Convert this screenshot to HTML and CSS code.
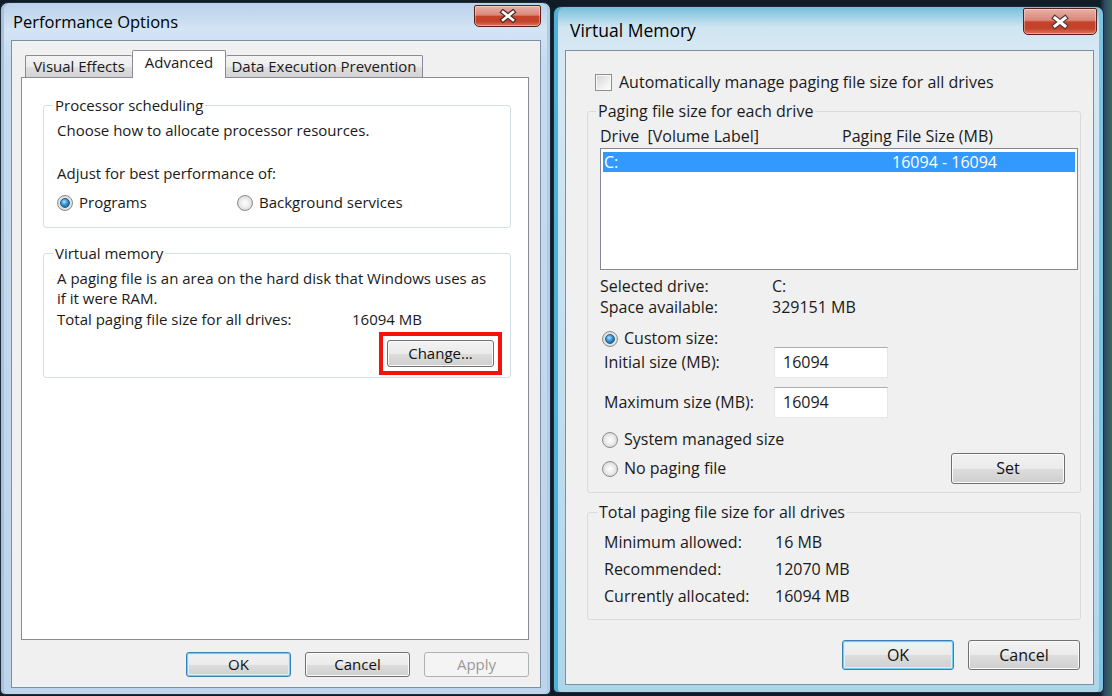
FILE: index.html
```html
<!DOCTYPE html>
<html lang="en">
<head>
    <meta charset="UTF-8">
    <title>Performance Options - Virtual Memory</title>
    <link rel="stylesheet" href="styles.css">
</head>
<body>
    <div class="desktop">
        <!-- Performance Options dialog -->
        <div class="window perf-window">
            <div class="titlebar">
                <span class="title">Performance Options</span>
                <div class="close-btn">
                    <svg width="18" height="14" viewBox="0 0 18 14">
                        <path d="M4 3 L14 11 M14 3 L4 11" stroke="#4a2a26" stroke-width="5" stroke-linecap="square"/>
                        <path d="M4 3 L14 11 M14 3 L4 11" stroke="#ffffff" stroke-width="2.6" stroke-linecap="square"/>
                    </svg>
                </div>
            </div>
            <div class="client perf-client">
                <div class="tabs">
                    <div class="tab tab-visual">Visual Effects</div>
                    <div class="tab tab-advanced active">Advanced</div>
                    <div class="tab tab-dep">Data Execution Prevention</div>
                </div>
                <div class="tab-panel">
                    <fieldset class="group">
                        <legend>Processor scheduling</legend>
                        <p>Choose how to allocate processor resources.</p>
                        <p class="adjust">Adjust for best performance of:</p>
                        <div class="radio-pair">
                            <label class="radio"><span class="radio-dot checked"></span>Programs</label>
                            <label class="radio"><span class="radio-dot"></span>Background services</label>
                        </div>
                    </fieldset>
                    <fieldset class="group vm-group">
                        <legend>Virtual memory</legend>
                        <p class="paging-note">A paging file is an area on the hard disk that Windows uses as<br>if it were RAM.</p>
                        <div class="total-row">
                            <span>Total paging file size for all drives:</span>
                            <span>16094 MB</span>
                        </div>
                        <div class="change-row">
                            <div class="highlight">
                                <button class="btn change-btn">Change...</button>
                            </div>
                        </div>
                    </fieldset>
                </div>
                <div class="dialog-buttons perf-buttons">
                    <button class="btn default">OK</button>
                    <button class="btn">Cancel</button>
                    <button class="btn" disabled>Apply</button>
                </div>
            </div>
        </div>

        <!-- Virtual Memory dialog -->
        <div class="window vm-window">
            <div class="titlebar">
                <span class="title">Virtual Memory</span>
                <div class="close-btn">
                    <svg width="20" height="16" viewBox="0 0 20 16">
                        <path d="M5 4 L15 12 M15 4 L5 12" stroke="#5a3a36" stroke-width="5.4" stroke-linecap="square"/>
                        <path d="M5 4 L15 12 M15 4 L5 12" stroke="#ffffff" stroke-width="3" stroke-linecap="square"/>
                    </svg>
                </div>
            </div>
            <div class="client vm-client">
                <label class="check-row"><span class="checkbox"></span>Automatically manage paging file size for all drives</label>

                <fieldset class="group flat drive-group">
                    <legend>Paging file size for each drive</legend>
                    <div class="list-head">
                        <span>Drive  [Volume Label]</span>
                        <span>Paging File Size (MB)</span>
                    </div>
                    <div class="listbox">
                        <div class="list-row selected">
                            <span>C:</span>
                            <span class="num">16094 - 16094</span>
                        </div>
                    </div>
                    <div class="info-grid">
                        <span>Selected drive:</span><span>C:</span>
                        <span>Space available:</span><span>329151 MB</span>
                    </div>
                    <label class="radio custom-radio"><span class="radio-dot checked"></span>Custom size:</label>
                    <div class="size-grid">
                        <span>Initial size (MB):</span><div class="textbox">16094</div>
                        <span>Maximum size (MB):</span><div class="textbox">16094</div>
                    </div>
                    <label class="radio system-radio"><span class="radio-dot"></span>System managed size</label>
                    <div class="nopage-row">
                        <label class="radio"><span class="radio-dot"></span>No paging file</label>
                        <button class="btn set-btn">Set</button>
                    </div>
                </fieldset>

                <fieldset class="group flat total-group">
                    <legend>Total paging file size for all drives</legend>
                    <div class="totals-grid">
                        <span>Minimum allowed:</span><span>16 MB</span>
                        <span>Recommended:</span><span>12070 MB</span>
                        <span>Currently allocated:</span><span>16094 MB</span>
                    </div>
                </fieldset>

                <div class="dialog-buttons vm-buttons">
                    <button class="btn default">OK</button>
                    <button class="btn">Cancel</button>
                </div>
            </div>
        </div>
    </div>
</body>
</html>
```

FILE: styles.css
```css
* {
    margin: 0;
    padding: 0;
    box-sizing: border-box;
}

body {
    width: 1112px;
    height: 696px;
    overflow: hidden;
    background: linear-gradient(90deg, #111d26 0, #111d26 1100px, #2e4c68 1105px, #3c6a58 1112px);
    font-family: "Open Sans", "Noto Sans", sans-serif;
    font-size: 15px;
    line-height: 17px;
    color: #1a1a1a;
}

.desktop {
    display: flex;
    align-items: flex-start;
    gap: 2px;
}

/* Aero window frame */
.window {
    display: flex;
    flex-direction: column;
    border: 1px solid #1d2c38;
    border-radius: 8px 8px 5px 5px;
}

.perf-window {
    width: 551px;
    height: 693px;
    margin-top: 2px;
    padding: 0 9px 6px 10px;
    background: linear-gradient(180deg, #b9d1ea 0, #d3e4f4 26px, #c6dbef 60px, #bcd4ec 100%);
    box-shadow: inset 3px 0 0 #a9c2dc, inset -3px 0 0 #b0cbe5;
}

.vm-window {
    width: 551px;
    height: 687px;
    margin-top: 6px;
    padding: 0 9px 7px 11px;
    background: linear-gradient(180deg, #74c0db 0, #cfe5f1 20px, #d6e8f3 42px, #aed6eb 100%);
    box-shadow: inset 4px 0 0 #4fb0d8, inset -4px 0 0 #7cc4e1;
}

.titlebar {
    display: flex;
    justify-content: space-between;
    align-items: flex-start;
}

.perf-window .titlebar {
    height: 37px;
}

.vm-window .titlebar {
    height: 43px;
}

.title {
    line-height: 20px;
    color: #000;
}

.perf-window .title {
    font-size: 16.5px;
    margin: 9px 0 0 2px;
}

.vm-window .title {
    font-size: 17.5px;
    margin: 13px 0 0 5px;
}

.close-btn {
    display: flex;
    align-items: center;
    justify-content: center;
    border: 1px solid #5a2018;
    border-radius: 2px 2px 5px 5px;
    background: linear-gradient(180deg, #eab0a5 0, #d9877a 45%, #c5432b 52%, #c4412a 78%, #dc7a62 100%);
    box-shadow: inset 0 0 0 1px rgba(255, 255, 255, 0.35);
}

.perf-window .close-btn {
    width: 67px;
    height: 22px;
    margin-top: 2px;
}

.vm-window .close-btn {
    width: 74px;
    height: 27px;
    margin: 1px -3px 0 0;
}

.client {
    flex: 1;
    display: flex;
    flex-direction: column;
    background: #f0f0f0;
    border: 1px solid #7b90a4;
}

/* Performance Options content */
.perf-client {
    padding: 9px 11px 10px 9px;
}

.tabs {
    display: flex;
    align-items: flex-end;
    height: 27px;
    padding-left: 4px;
}

.tab {
    height: 22px;
    display: flex;
    align-items: center;
    justify-content: center;
    border: 1px solid #898c95;
    border-bottom: none;
    border-radius: 2px 2px 0 0;
    background: linear-gradient(180deg, #f4f4f4 0, #ececec 50%, #e0e0e0 51%, #d3d3d3 100%);
}

.tab-visual {
    width: 107px;
    border-right: none;
}

.tab-advanced {
    width: 94px;
}

.tab-dep {
    width: 197px;
    border-left: none;
}

.tab.active {
    height: 28px;
    margin-bottom: -1px;
    padding-bottom: 4px;
    background: #fff;
    position: relative;
    z-index: 1;
}

.tab-panel {
    flex: 1;
    background: #fff;
    border: 1px solid #898c95;
    padding: 19px 17px 0 21px;
}

.group {
    border: 1px solid #d5dfe5;
    border-radius: 3px;
    padding: 8px 8px 16px 13px;
}

.group legend {
    padding: 0 2px;
    margin-left: -4px;
    line-height: 17px;
}

.adjust {
    margin-top: 26px;
}

.radio-pair {
    display: grid;
    grid-template-columns: 180px auto;
    margin-top: 12px;
}

.radio {
    display: flex;
    align-items: center;
    gap: 6px;
}

.radio-dot {
    width: 16px;
    height: 16px;
    border-radius: 50%;
    border: 1px solid #8c8c8c;
    background: radial-gradient(circle at 50% 50%, #ffffff 0, #ececec 45%, #c9c9c9 100%);
    display: inline-flex;
    align-items: center;
    justify-content: center;
}

.radio-dot.checked::after {
    content: "";
    width: 8px;
    height: 8px;
    border-radius: 50%;
    background: radial-gradient(circle at 40% 35%, #b4e3fb 0, #3593d6 45%, #0f4f82 100%);
    border: 1px solid #1e5a86;
}

.vm-group {
    margin-top: 17px;
    padding-top: 6px;
    padding-bottom: 2px;
}

.paging-note {
    white-space: nowrap;
    line-height: 20px;
}

.total-row {
    display: grid;
    grid-template-columns: 295px auto;
    margin-top: 3px;
}

.change-row {
    display: flex;
    justify-content: flex-end;
    margin-top: 4px;
}

.highlight {
    border: 4px solid #f4130a;
    padding: 4px;
}

/* Win7 push buttons */
.btn {
    font: inherit;
    color: #111;
    border: 1px solid #707070;
    border-radius: 3px;
    background: linear-gradient(180deg, #f2f2f2 0, #ebebeb 50%, #dddddd 51%, #cfcfcf 100%);
    box-shadow: inset 0 0 0 1px #fbfbfb;
    display: flex;
    align-items: center;
    justify-content: center;
}

.btn.default {
    border-color: #3c7fb1;
    box-shadow: inset 0 0 0 1px #6fd0f5, inset 0 0 0 2px #d9f0fb;
}

.btn:disabled {
    color: #9a9a9a;
    border-color: #adb2b5;
    background: #f4f4f4;
    box-shadow: none;
}

.change-btn {
    width: 107px;
    height: 27px;
}

.dialog-buttons {
    display: flex;
    justify-content: flex-end;
    gap: 14px;
}

.perf-buttons {
    margin-top: 12px;
}

.perf-buttons .btn {
    width: 105px;
    height: 25px;
}

/* Virtual Memory content */
.vm-client {
    font-size: 16px;
    padding: 23px 12px 14px 21px;
}

.check-row {
    display: flex;
    align-items: center;
    gap: 7px;
    margin-left: 8px;
}

.checkbox {
    width: 17px;
    height: 17px;
    border: 1px solid #8e8f8f;
    background: linear-gradient(135deg, #d4d4d4 0, #f4f4f4 70%, #ffffff 100%);
    box-shadow: inset 0 0 0 1px #f8f8f8;
}

.group.flat {
    width: 494px;
    border-color: #dadada;
}

.drive-group {
    margin-top: 12px;
    padding: 8px 2px 8px 12px;
}

.list-head {
    display: grid;
    grid-template-columns: 242px auto;
    white-space: pre;
}

.listbox {
    height: 122px;
    margin-top: 3px;
    background: #fff;
    border: 1px solid #828790;
    padding: 3px 2px 0 2px;
}

.list-row {
    display: grid;
    grid-template-columns: 239px 154px;
    height: 20px;
    align-items: center;
    padding-left: 1px;
}

.list-row.selected {
    background: #3399ff;
    color: #fff;
}

.list-row .num {
    text-align: right;
}

.info-grid {
    display: grid;
    grid-template-columns: 172px auto;
    row-gap: 4px;
    margin-top: 8px;
}

.custom-radio {
    margin: 14px 0 0 2px;
}

.size-grid {
    display: grid;
    grid-template-columns: 170px 114px;
    grid-auto-rows: 31px;
    row-gap: 9px;
    align-items: center;
    padding-left: 4px;
}

.textbox {
    height: 31px;
    display: flex;
    align-items: center;
    padding-left: 8px;
    background: #fff;
    border: 1px solid #e2e7ec;
    border-top-color: #abadb3;
}

.system-radio {
    margin: 13px 0 0 2px;
}

.nopage-row {
    display: flex;
    justify-content: space-between;
    align-items: center;
    margin-top: 5px;
    padding-left: 2px;
}

.set-btn {
    width: 114px;
    height: 31px;
    margin-right: 13px;
}

.total-group {
    margin-top: 11px;
    padding: 13px 2px 14px 16px;
}

.total-group legend {
    margin-left: -7px;
}

.totals-grid {
    display: grid;
    grid-template-columns: 171px auto;
    row-gap: 10px;
}

.vm-buttons {
    margin: 20px 1px 0 0;
}

.vm-buttons .btn {
    width: 112px;
    height: 30px;
}
```
